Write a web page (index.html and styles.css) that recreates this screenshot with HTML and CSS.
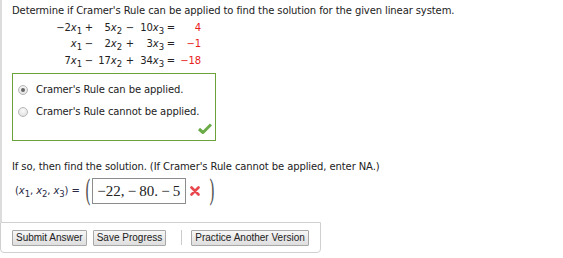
FILE: index.html
```html
<!DOCTYPE html>
<html>
<head>
<meta charset="utf-8">
<link rel="stylesheet" href="styles.css">
</head>
<body>
<div class="question">
  <div class="prompt">Determine if Cramer's Rule can be applied to find the solution for the given linear system.</div>
  <div class="system">
    <span class="t">−2<i>x</i><sub>1</sub></span><span class="op">+</span><span class="t">5<i>x</i><sub>2</sub></span><span class="op">−</span><span class="t">10<i>x</i><sub>3</sub></span><span class="op">=</span><span class="rhs">4</span>
    <span class="t"><i>x</i><sub>1</sub></span><span class="op">−</span><span class="t">2<i>x</i><sub>2</sub></span><span class="op">+</span><span class="t">3<i>x</i><sub>3</sub></span><span class="op">=</span><span class="rhs">−1</span>
    <span class="t">7<i>x</i><sub>1</sub></span><span class="op">−</span><span class="t">17<i>x</i><sub>2</sub></span><span class="op">+</span><span class="t">34<i>x</i><sub>3</sub></span><span class="op">=</span><span class="rhs">−18</span>
  </div>
  <div class="choices">
    <div class="choice"><span class="radio checked"></span><span>Cramer's Rule can be applied.</span></div>
    <div class="choice"><span class="radio"></span><span>Cramer's Rule cannot be applied.</span></div>
    <svg class="check" width="14" height="11" viewBox="0 0 14 11"><path d="M1 6 L5 9.5 L13 1.5" fill="none" stroke="#6aab47" stroke-width="3" stroke-linejoin="round"/></svg>
  </div>
  <div class="prompt2">If so, then find the solution. (If Cramer's Rule cannot be applied, enter NA.)</div>
  <div class="answer">
    <span class="vars">(<i>x</i><sub>1</sub>, <i>x</i><sub>2</sub>, <i>x</i><sub>3</sub>) =</span>
    <span class="paren">(</span>
    <span class="box">−22, − 80. − 5</span>
    <svg class="wrong" width="10" height="10" viewBox="0 0 10 10"><path d="M1.5 1.5 L8.5 8.5 M8.5 1.5 L1.5 8.5" stroke="#e8484d" stroke-width="2.6" stroke-linecap="round"/></svg>
    <span class="paren close">)</span>
  </div>
</div>
<div class="buttons">
  <button class="btn">Submit Answer</button>
  <button class="btn">Save Progress</button>
  <span class="sep"></span>
  <button class="btn">Practice Another Version</button>
</div>
</body>
</html>
```
FILE: styles.css
```css
html, body {
  margin: 0;
  padding: 0;
  background: #fff;
}
body {
  font-family: "DejaVu Sans", Verdana, sans-serif;
  font-size: 10px;
  letter-spacing: -0.1px;
  color: #222;
  width: 563px;
  height: 258px;
  overflow: hidden;
}
.question {
  border-left: 2px solid #dcdcdc;
  padding: 4px 0 0 10px;
  height: 218px;
}
.prompt {
  line-height: 14px;
}
.system {
  margin-left: 43px;
  margin-top: 1px;
  display: grid;
  grid-template-columns: 27px 14px 26px 16px 26px 14px 23px;
  grid-auto-rows: 16.5px;
  align-items: center;
}
.system i, .vars i {
  font-style: italic;
}
sub {
  font-size: 8.5px;
  vertical-align: -3px;
  line-height: 0;
}
.t { text-align: right; white-space: nowrap; }
.op { text-align: center; }
.rhs { text-align: right; color: #e8201a; }
.choices {
  margin-top: 4px;
  width: 202px;
  height: 61px;
  border: 1px solid #6ba33a;
  position: relative;
  padding-top: 5px;
}
.choice {
  display: flex;
  align-items: center;
  height: 22px;
  padding-left: 5px;
  white-space: nowrap;
}
.radio {
  flex: none;
  width: 10px;
  height: 10px;
  border-radius: 50%;
  box-sizing: border-box;
  border: 1px solid #b8b8b8;
  background: radial-gradient(circle at 50% 35%, #fafafa, #dcdcdc);
  margin-right: 8px;
  position: relative;
}
.radio.checked::after {
  content: "";
  position: absolute;
  left: 2px;
  top: 2px;
  width: 4px;
  height: 4px;
  border-radius: 50%;
  background: #666;
}
.check {
  position: absolute;
  right: 3px;
  bottom: 6px;
}
.prompt2 {
  margin-top: 19px;
  line-height: 14px;
}
.answer {
  display: flex;
  align-items: center;
  margin-top: 4px;
  padding-left: 3px;
  height: 26px;
}
.vars {
  color: #2a2a44;
  margin-right: 3px;
  white-space: nowrap;
}
.paren {
  font-family: "DejaVu Serif", serif;
  font-size: 30px;
  line-height: 26px;
  color: #555;
  transform: scaleX(0.5);
  margin: 0 -1px;
}
.paren.close {
  margin-left: 6px;
}
.box {
  flex: none;
  border: 1px solid #8c8c8c;
  height: 24px;
  width: 88px;
  padding-left: 4px;
  padding-right: 0;
  font-family: "Liberation Serif", "Times New Roman", serif;
  font-size: 15px;
  letter-spacing: 0;
  word-spacing: -0.6px;
  line-height: 24px;
  color: #222;
  white-space: nowrap;
  overflow: hidden;
}
.wrong {
  margin-left: 4px;
}
.buttons {
  border: 1px solid #d0d0d0;
  border-radius: 0 0 4px 4px;
  display: flex;
  align-items: center;
  padding-left: 11px;
  box-sizing: border-box;
  width: 321px;
  height: 31px;
}
.btn {
  flex: none;
  white-space: nowrap;
  font-family: "Liberation Sans", Arial, sans-serif;
  font-size: 10px;
  letter-spacing: 0;
  color: #222;
  height: 16px;
  padding: 0 3px;
  margin: 0 6px 0 0;
  border: 1px solid #a8a8a8;
  border-radius: 1px;
  background: linear-gradient(#f7f7f7, #dedede);
  line-height: 14px;
}
.sep {
  flex: none;
  width: 1px;
  height: 15px;
  background: #ccc;
  margin: 0 9px 0 9px;
}
```
